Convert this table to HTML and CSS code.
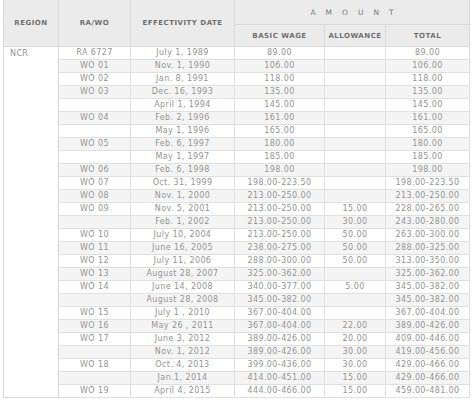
FILE: index.html
```html
<!DOCTYPE html>
<html>
<head>
<meta charset="utf-8">
<link rel="stylesheet" href="styles.css">
</head>
<body>
<table class="wage">
<colgroup>
<col class="c-region"><col class="c-rawo"><col class="c-date"><col class="c-basic"><col class="c-allow"><col class="c-total">
</colgroup>
<thead>
<tr class="h1">
<th rowspan="2">REGION</th>
<th rowspan="2">RA/WO</th>
<th rowspan="2">EFFECTIVITY DATE</th>
<th colspan="3" class="amount">AMOUNT</th>
</tr>
<tr class="h2">
<th>BASIC WAGE</th>
<th>ALLOWANCE</th>
<th>TOTAL</th>
</tr>
</thead>
<tbody>
<tr><td rowspan="27" class="region">NCR</td><td>RA 6727</td><td>July 1, 1989</td><td>89.00</td><td></td><td>89.00</td></tr>
<tr class="alt"><td>WO 01</td><td>Nov. 1, 1990</td><td>106.00</td><td></td><td>106.00</td></tr>
<tr><td>WO 02</td><td>Jan. 8, 1991</td><td>118.00</td><td></td><td>118.00</td></tr>
<tr class="alt"><td>WO 03</td><td>Dec. 16, 1993</td><td>135.00</td><td></td><td>135.00</td></tr>
<tr><td></td><td>April 1, 1994</td><td>145.00</td><td></td><td>145.00</td></tr>
<tr class="alt"><td>WO 04</td><td>Feb. 2, 1996</td><td>161.00</td><td></td><td>161.00</td></tr>
<tr><td></td><td>May 1, 1996</td><td>165.00</td><td></td><td>165.00</td></tr>
<tr class="alt"><td>WO 05</td><td>Feb. 6, 1997</td><td>180.00</td><td></td><td>180.00</td></tr>
<tr><td></td><td>May 1, 1997</td><td>185.00</td><td></td><td>185.00</td></tr>
<tr class="alt"><td>WO 06</td><td>Feb. 6, 1998</td><td>198.00</td><td></td><td>198.00</td></tr>
<tr><td>WO 07</td><td>Oct. 31, 1999</td><td>198.00-223.50</td><td></td><td>198.00-223.50</td></tr>
<tr class="alt"><td>WO 08</td><td>Nov. 1, 2000</td><td>213.00-250.00</td><td></td><td>213.00-250.00</td></tr>
<tr><td>WO 09</td><td>Nov. 5, 2001</td><td>213.00-250.00</td><td>15.00</td><td>228.00-265.00</td></tr>
<tr class="alt"><td></td><td>Feb. 1, 2002</td><td>213.00-250.00</td><td>30.00</td><td>243.00-280.00</td></tr>
<tr><td>WO 10</td><td>July 10, 2004</td><td>213.00-250.00</td><td>50.00</td><td>263.00-300.00</td></tr>
<tr class="alt"><td>WO 11</td><td>June 16, 2005</td><td>238.00-275.00</td><td>50.00</td><td>288.00-325.00</td></tr>
<tr><td>WO 12</td><td>July 11, 2006</td><td>288.00-300.00</td><td>50.00</td><td>313.00-350.00</td></tr>
<tr class="alt"><td>WO 13</td><td>August 28, 2007</td><td>325.00-362.00</td><td></td><td>325.00-362.00</td></tr>
<tr><td>WO 14</td><td>June 14, 2008</td><td>340.00-377.00</td><td>5.00</td><td>345.00-382.00</td></tr>
<tr class="alt"><td></td><td>August 28, 2008</td><td>345.00-382.00</td><td></td><td>345.00-382.00</td></tr>
<tr><td>WO 15</td><td>July 1 , 2010</td><td>367.00-404.00</td><td></td><td>367.00-404.00</td></tr>
<tr class="alt"><td>WO 16</td><td>May 26 , 2011</td><td>367.00-404.00</td><td>22.00</td><td>389.00-426.00</td></tr>
<tr><td>WO 17</td><td>June 3, 2012</td><td>389.00-426.00</td><td>20.00</td><td>409.00-446.00</td></tr>
<tr class="alt"><td></td><td>Nov. 1, 2012</td><td>389.00-426.00</td><td>30.00</td><td>419.00-456.00</td></tr>
<tr><td>WO 18</td><td>Oct. 4, 2013</td><td>399.00-436.00</td><td>30.00</td><td>429.00-466.00</td></tr>
<tr class="alt"><td></td><td>Jan.1, 2014</td><td>414.00-451.00</td><td>15.00</td><td>429.00-466.00</td></tr>
<tr><td>WO 19</td><td>April 4, 2015</td><td>444.00-466.00</td><td>15.00</td><td>459.00-481.00</td></tr>
</tbody>
</table>
</body>
</html>
```
FILE: styles.css
```css
html, body {
  margin: 0;
  padding: 0;
  background: #ffffff;
}
body {
  padding: 0 0 0 3px;
  font-family: "DejaVu Sans", Verdana, sans-serif;
}
.wage {
  border-collapse: collapse;
  table-layout: fixed;
  width: 466px;
  margin-top: -1px;
}
.c-region { width: 55px; }
.c-rawo { width: 72px; }
.c-date { width: 104px; }
.c-basic { width: 90px; }
.c-allow { width: 61px; }
.c-total { width: 84px; }
.wage th {
  background: #ebebeb;
  border: 1px solid #d9d9d9;
  color: #707070;
  font-size: 7px;
  font-weight: bold;
  letter-spacing: 0.5px;
  padding: 0;
  text-align: center;
  vertical-align: middle;
}
.wage .h1 th { height: 24px; }
.wage .h2 th { height: 21px; }
.wage th.amount {
  font-weight: normal;
  font-size: 7.5px;
  letter-spacing: 10px;
  padding-left: 10px;
  color: #7a7a7a;
}
.wage td {
  border: 1px solid #e0e0e0;
  color: #949494;
  font-size: 8px;
  letter-spacing: 0.4px;
  line-height: 12px;
  height: 12px;
  padding: 0;
  text-align: center;
  white-space: nowrap;
  background: #ffffff;
}
.wage tr.alt td {
  background: #f4f4f4;
}
.wage td.region {
  text-align: left;
  vertical-align: top;
  padding-left: 6px;
  padding-top: 1px;
  background: #ffffff;
  border-color: #d9d9d9;
}
```
